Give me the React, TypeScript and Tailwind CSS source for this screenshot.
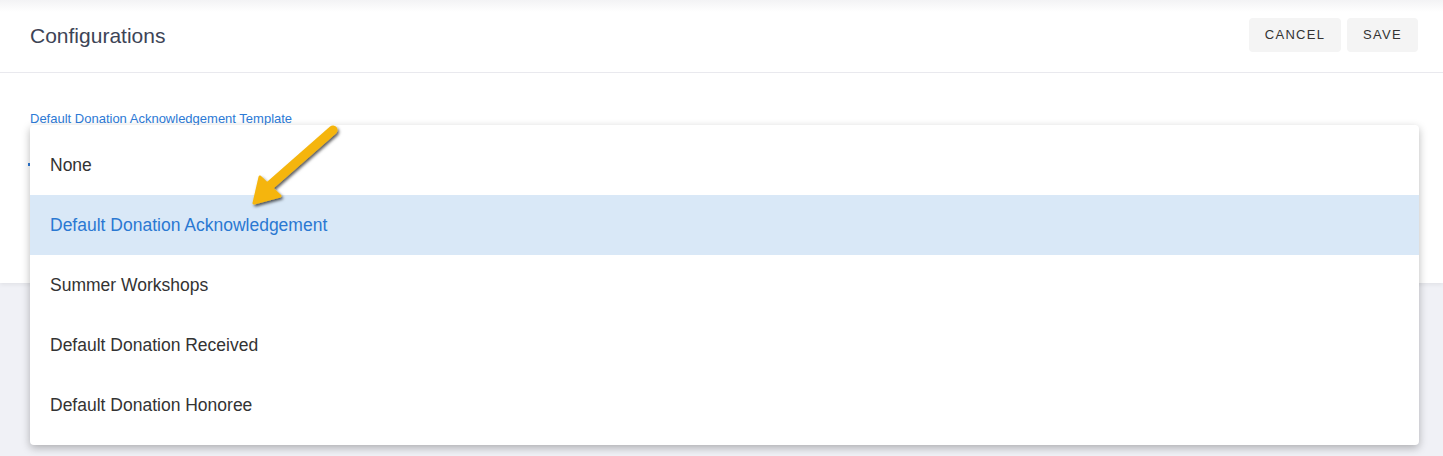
import { useState } from 'react'

const templates = [
  'None',
  'Default Donation Acknowledgement',
  'Summer Workshops',
  'Default Donation Received',
  'Default Donation Honoree',
]

// Yellow callout arrow pointing at the selected option
function CalloutArrow() {
  return (
    <svg
      className="pointer-events-none absolute left-[240px] top-[115px] h-[95px] w-[110px]"
      viewBox="0 0 110 95"
      fill="none"
    >
      <defs>
        <filter id="arrow-shadow" x="-30%" y="-30%" width="160%" height="160%">
          <feDropShadow dx="1.5" dy="2" stdDeviation="1.6" floodColor="#000" floodOpacity="0.65" />
        </filter>
      </defs>
      <g filter="url(#arrow-shadow)">
        <line x1="93" y1="15" x2="27" y2="73" stroke="#f5b50a" strokeWidth="9" strokeLinecap="round" />
        <path d="M14 88 L20 62 L40 81 Z" fill="#f5b50a" stroke="#f5b50a" strokeWidth="3" strokeLinejoin="round" />
      </g>
    </svg>
  )
}

export default function App() {
  const [selected] = useState(1)

  return (
    <div className="relative min-h-[456px] bg-[#f0f1f6] font-['Liberation_Sans',Arial,sans-serif]">
      <section className="relative h-[283px] bg-white shadow-[0_2px_4px_rgba(0,0,0,0.06)]">
        <div className="pointer-events-none absolute inset-x-0 top-0 h-3 bg-gradient-to-b from-[#f3f3f5] to-white" />
        <header className="relative flex h-[73px] items-center justify-between border-b border-[#e9e9ee] pl-[30px] pr-[25px]">
          <h1 className="text-[21px] text-[#3d4456]">Configurations</h1>
          <div className="flex gap-[6px] pb-[2px]">
            <button className="h-[34px] w-[92px] rounded-[4px] bg-[#f4f4f4] text-[13px] tracking-[1.3px] text-[#333]">
              CANCEL
            </button>
            <button className="h-[34px] w-[71px] rounded-[4px] bg-[#f4f4f4] text-[13px] tracking-[1.3px] text-[#333]">
              SAVE
            </button>
          </div>
        </header>
        <div className="px-[30px] pt-[38px]">
          <label className="block text-[13px] leading-4 text-[#2d7ad6]">Default Donation Acknowledgement Template</label>
        </div>
        <div className="absolute left-[28px] top-[163px] h-[3px] w-[2px] bg-[#2d7ad6]" />
      </section>

      <ul className="absolute left-[30px] right-[24px] top-[125px] rounded-[4px] bg-white py-[10px] shadow-[0_3px_8px_rgba(0,0,0,0.28)]">
        {templates.map((name, i) => (
          <li
            key={name}
            className={
              i === selected
                ? 'flex h-[60px] items-center bg-[#d9e8f7] px-[20px] text-[17.5px] text-[#2a78d2]'
                : 'flex h-[60px] items-center px-[20px] text-[17.5px] text-[#333]'
            }
          >
            {name}
          </li>
        ))}
      </ul>

      <CalloutArrow />
    </div>
  )
}
